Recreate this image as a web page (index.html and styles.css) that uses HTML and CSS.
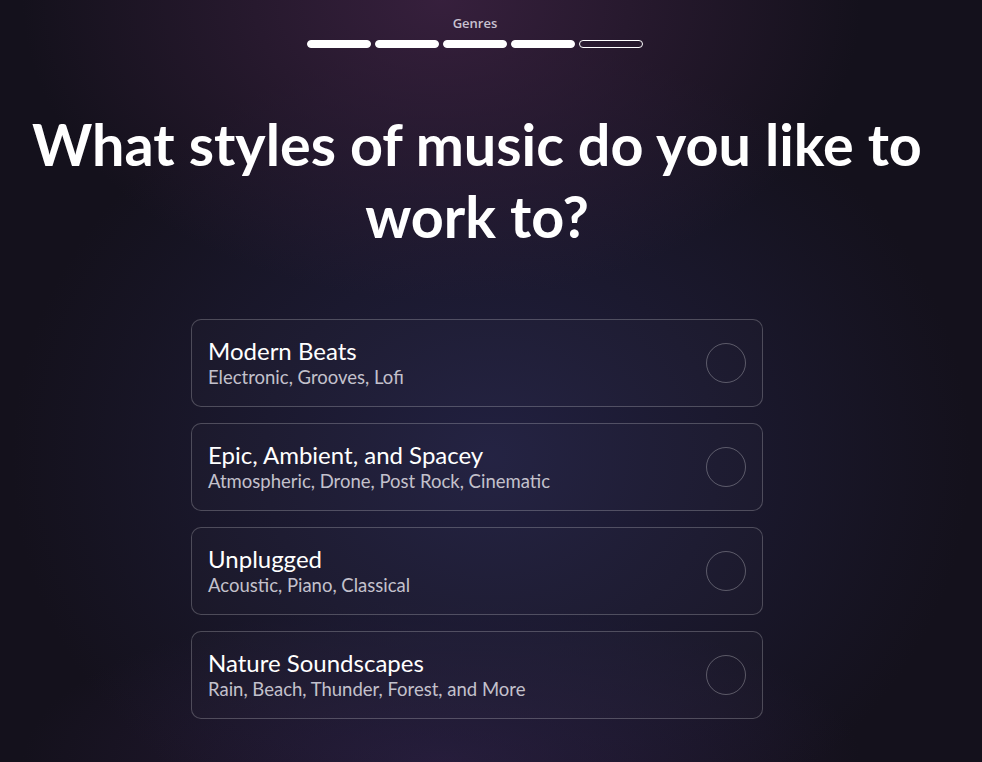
FILE: index.html
```html
<!DOCTYPE html>
<html lang="en">
<head>
    <meta charset="UTF-8">
    <meta name="viewport" content="width=device-width, initial-scale=1.0">
    <title>Genres</title>
    <link rel="stylesheet" href="styles.css">
</head>
<body>
    <div class="page">
        <div class="steps">
            <div class="steps-label">Genres</div>
            <div class="steps-bars">
                <span class="bar done"></span>
                <span class="bar done"></span>
                <span class="bar done"></span>
                <span class="bar done"></span>
                <span class="bar"></span>
            </div>
        </div>

        <h1>What styles of music do you like to work to?</h1>

        <div class="options">
            <div class="option">
                <div class="option-text">
                    <div class="option-title">Modern Beats</div>
                    <div class="option-sub">Electronic, Grooves, Lofi</div>
                </div>
                <span class="radio"></span>
            </div>
            <div class="option">
                <div class="option-text">
                    <div class="option-title">Epic, Ambient, and Spacey</div>
                    <div class="option-sub">Atmospheric, Drone, Post Rock, Cinematic</div>
                </div>
                <span class="radio"></span>
            </div>
            <div class="option">
                <div class="option-text">
                    <div class="option-title">Unplugged</div>
                    <div class="option-sub">Acoustic, Piano, Classical</div>
                </div>
                <span class="radio"></span>
            </div>
            <div class="option">
                <div class="option-text">
                    <div class="option-title">Nature Soundscapes</div>
                    <div class="option-sub">Rain, Beach, Thunder, Forest, and More</div>
                </div>
                <span class="radio"></span>
            </div>
        </div>
    </div>
</body>
</html>
```

FILE: styles.css
```css
html, body {
    height: 100%;
}
body {
    margin: 0;
    font-family: Lato, "Open Sans", sans-serif;
    color: #fff;
    background-color: #14111c;
    background-image:
        radial-gradient(ellipse 420px 300px at 45% 0%, rgba(58, 33, 64, 0.9), rgba(58, 33, 64, 0)),
        radial-gradient(ellipse 480px 420px at 50% 60%, rgba(34, 33, 66, 0.95), rgba(34, 33, 66, 0)),
        radial-gradient(ellipse 420px 160px at 45% 100%, rgba(44, 30, 64, 0.8), rgba(44, 30, 64, 0));
    overflow: hidden;
}
.page {
    width: 954px;
    padding-top: 14px;
}
.steps {
    display: flex;
    flex-direction: column;
    align-items: center;
    margin-right: 4px;
}
.steps-label {
    font-family: "Open Sans", sans-serif;
    font-size: 13px;
    font-weight: 600;
    color: #c9c2d0;
    line-height: 18px;
}
.steps-bars {
    display: flex;
    gap: 4px;
    margin-top: 8px;
}
.bar {
    width: 64px;
    height: 8px;
    border-radius: 4px;
    box-sizing: border-box;
    border: 1.5px solid #fff;
}
.bar.done {
    background: #fff;
}
h1 {
    max-width: 910px;
    margin: 60px auto 0;
    text-align: center;
    font-size: 57.5px;
    font-weight: 700;
    line-height: 72px;
    letter-spacing: 0;
}
.options {
    width: 572px;
    margin: 67px auto 0;
    display: flex;
    flex-direction: column;
    gap: 16px;
}
.option {
    height: 88px;
    box-sizing: border-box;
    display: flex;
    align-items: center;
    justify-content: space-between;
    padding: 0 16px 0 16px;
    border: 1px solid rgba(255, 255, 255, 0.22);
    border-radius: 10px;
    background: rgba(255, 255, 255, 0.015);
}
.option-title {
    font-size: 24px;
    line-height: 26px;
    color: #fff;
}
.option-sub {
    font-size: 18.5px;
    line-height: 22px;
    color: #c3c1cc;
    margin-top: 2px;
}
.radio {
    width: 40px;
    height: 40px;
    box-sizing: border-box;
    border-radius: 50%;
    border: 1px solid rgba(255, 255, 255, 0.28);
}
```
